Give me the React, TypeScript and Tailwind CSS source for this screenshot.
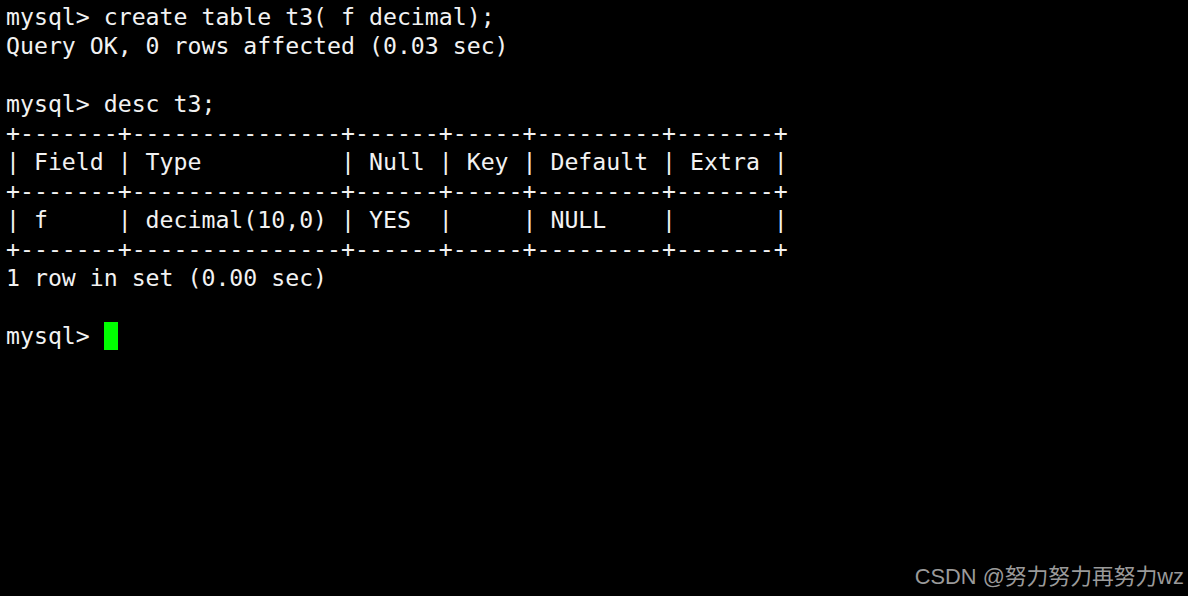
import React from 'react';

const lines = [
  'mysql> create table t3( f decimal);',
  'Query OK, 0 rows affected (0.03 sec)',
  '',
  'mysql> desc t3;',
  '+-------+---------------+------+-----+---------+-------+',
  '| Field | Type          | Null | Key | Default | Extra |',
  '+-------+---------------+------+-----+---------+-------+',
  '| f     | decimal(10,0) | YES  |     | NULL    |       |',
  '+-------+---------------+------+-----+---------+-------+',
  '1 row in set (0.00 sec)',
  '',
];

export default function App() {
  return (
    <div className="w-[1188px] h-[596px] bg-black overflow-hidden flex flex-col justify-between">
      <pre className="pl-[6px] pt-[2px] text-[#f2f2f2] text-[23.2px] leading-[29px] [font-family:'DejaVu_Sans_Mono',monospace]">
        {lines.map((l, i) => (
          <div key={i} className="h-[29px] whitespace-pre">{l}</div>
        ))}
        <div className="h-[29px] whitespace-pre flex items-center">
          <span>mysql&gt; </span>
          <span className="inline-block w-[14px] h-[28px] bg-[#00ff00]" />
        </div>
      </pre>
      <div className="flex justify-end pr-[4px] pb-[6px]">
        <span className="text-[#9a9a9a] text-[21.8px] leading-[26px] [font-family:'Liberation_Sans','Noto_Sans_CJK_SC',sans-serif]">
          CSDN @努力努力再努力wz
        </span>
      </div>
    </div>
  );
}
